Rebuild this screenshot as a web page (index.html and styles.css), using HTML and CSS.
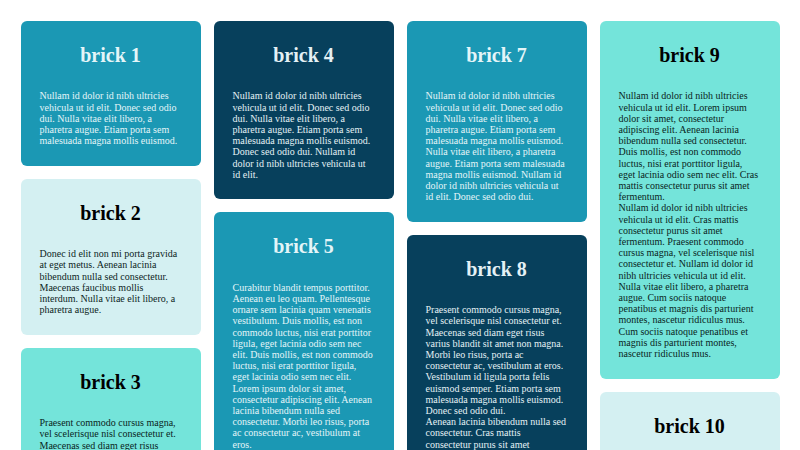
FILE: index.html
```html
<!DOCTYPE html>
<html lang="en">
<head>
<meta charset="utf-8">
<title>Bricks</title>
<link rel="stylesheet" href="styles.css">
</head>
<body>
<main class="wall">
  <div class="col">
    <section class="brick teal">
      <h2>brick 1</h2>
      <p>Nullam id dolor id nibh ultricies vehicula ut id elit. Donec sed odio dui. Nulla vitae elit libero, a pharetra augue. Etiam porta sem malesuada magna mollis euismod.</p>
    </section>
    <section class="brick light">
      <h2>brick 2</h2>
      <p>Donec id elit non mi porta gravida at eget metus. Aenean lacinia bibendum nulla sed consectetur. Maecenas faucibus mollis interdum. Nulla vitae elit libero, a pharetra augue.</p>
    </section>
    <section class="brick aqua">
      <h2>brick 3</h2>
      <p>Praesent commodo cursus magna, vel scelerisque nisl consectetur et. Maecenas sed diam eget risus varius blandit sit amet non magna. Morbi leo risus, porta ac consectetur ac, vestibulum at eros.</p>
    </section>
  </div>
  <div class="col">
    <section class="brick dark">
      <h2>brick 4</h2>
      <p>Nullam id dolor id nibh ultricies vehicula ut id elit. Donec sed odio dui. Nulla vitae elit libero, a pharetra augue. Etiam porta sem malesuada magna mollis euismod. Donec sed odio dui. Nullam id dolor id nibh ultricies vehicula ut id elit.</p>
    </section>
    <section class="brick teal">
      <h2>brick 5</h2>
      <p>Curabitur blandit tempus porttitor. Aenean eu leo quam. Pellentesque ornare sem lacinia quam venenatis vestibulum. Duis mollis, est non commodo luctus, nisi erat porttitor ligula, eget lacinia odio sem nec elit. Duis mollis, est non commodo luctus, nisi erat porttitor ligula, eget lacinia odio sem nec elit. Lorem ipsum dolor sit amet, consectetur adipiscing elit. Aenean lacinia bibendum nulla sed consectetur. Morbi leo risus, porta ac consectetur ac, vestibulum at eros.</p>
    </section>
    <section class="brick light">
      <h2>brick 6</h2>
      <p>Maecenas faucibus mollis interdum. Nulla vitae elit libero, a pharetra augue.</p>
    </section>
  </div>
  <div class="col">
    <section class="brick teal">
      <h2>brick 7</h2>
      <p>Nullam id dolor id nibh ultricies vehicula ut id elit. Donec sed odio dui. Nulla vitae elit libero, a pharetra augue. Etiam porta sem malesuada magna mollis euismod. Nulla vitae elit libero, a pharetra augue. Etiam porta sem malesuada magna mollis euismod. Nullam id dolor id nibh ultricies vehicula ut id elit. Donec sed odio dui.</p>
    </section>
    <section class="brick dark">
      <h2>brick 8</h2>
      <p>Praesent commodo cursus magna, vel scelerisque nisl consectetur et. Maecenas sed diam eget risus varius blandit sit amet non magna. Morbi leo risus, porta ac consectetur ac, vestibulum at eros. Vestibulum id ligula porta felis euismod semper. Etiam porta sem malesuada magna mollis euismod. Donec sed odio dui.<br>Aenean lacinia bibendum nulla sed consectetur. Cras mattis consectetur purus sit amet fermentum. Nulla vitae elit libero, a pharetra augue.</p>
    </section>
  </div>
  <div class="col">
    <section class="brick aqua">
      <h2>brick 9</h2>
      <p>Nullam id dolor id nibh ultricies vehicula ut id elit. Lorem ipsum dolor sit amet, consectetur adipiscing elit. Aenean lacinia bibendum nulla sed consectetur. Duis mollis, est non commodo luctus, nisi erat porttitor ligula, eget lacinia odio sem nec elit. Cras mattis consectetur purus sit amet fermentum.<br>Nullam id dolor id nibh ultricies vehicula ut id elit. Cras mattis consectetur purus sit amet fermentum. Praesent commodo cursus magna, vel scelerisque nisl consectetur et. Nullam id dolor id nibh ultricies vehicula ut id elit. Nulla vitae elit libero, a pharetra augue. Cum sociis natoque penatibus et magnis dis parturient montes, nascetur ridiculus mus. Cum sociis natoque penatibus et magnis dis parturient montes, nascetur ridiculus mus.</p>
    </section>
    <section class="brick light">
      <h2>brick 10</h2>
      <p>Donec id elit non mi porta gravida at eget metus. Aenean lacinia bibendum nulla sed consectetur.</p>
    </section>
  </div>
</main>
</body>
</html>
```
FILE: styles.css
```css
html, body {
  margin: 0;
  padding: 0;
  background: #ffffff;
}

body {
  font-family: "Liberation Serif", "Times New Roman", serif;
}

.wall {
  display: flex;
  justify-content: center;
  align-items: flex-start;
  gap: 13px;
  padding-top: 21px;
}

.col {
  width: 180px;
  display: flex;
  flex-direction: column;
  gap: 13px;
}

.brick {
  border-radius: 6px;
  padding: 23px 19px 19.5px 19px;
}

.brick h2 {
  margin: 0;
  font-size: 20px;
  line-height: 23px;
  font-weight: bold;
  text-align: center;
}

.brick p {
  margin: 23.3px 0 0;
  font-size: 10px;
  line-height: 11.2px;
}

.teal {
  background: #1b98b4;
  color: #e4f5f8;
}

.dark {
  background: #07405c;
  color: #e4f1f5;
}

.light {
  background: #d4f0f2;
  color: #0d1f24;
}

.aqua {
  background: #74e4da;
  color: #0a1f22;
}

.light h2, .aqua h2 {
  color: #000000;
}
```
